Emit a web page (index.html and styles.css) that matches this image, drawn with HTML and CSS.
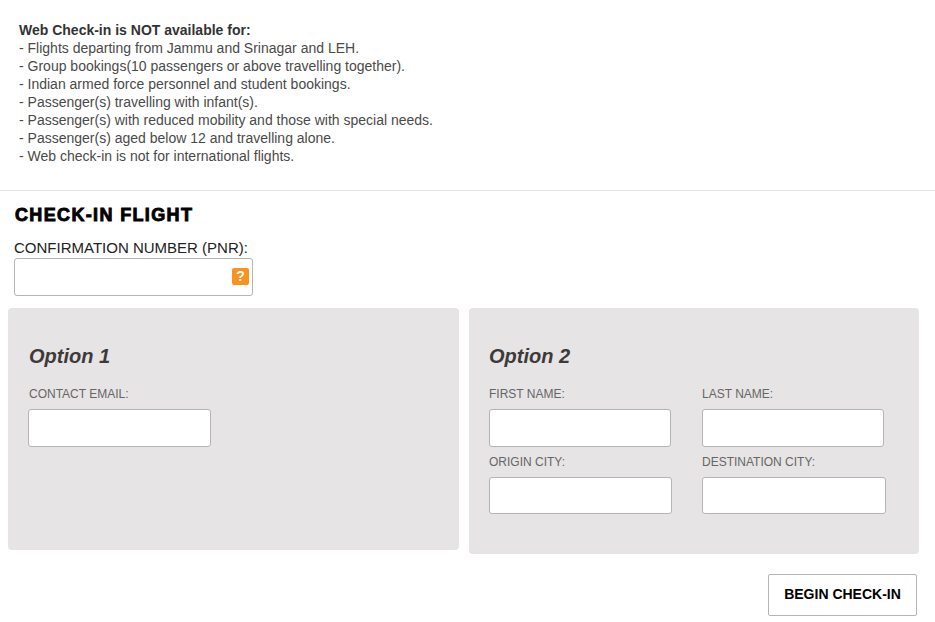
FILE: index.html
```html
<!DOCTYPE html>
<html lang="en">
<head>
  <meta charset="UTF-8">
  <meta name="viewport" content="width=device-width, initial-scale=1.0">
  <title>Web Check-in</title>
  <link rel="stylesheet" href="styles.css">
</head>
<body>
  <!-- Notice -->
  <div class="notice">
    <strong>Web Check-in is NOT available for:</strong><br>
    - Flights departing from Jammu and Srinagar and LEH.<br>
    - Group bookings(10 passengers or above travelling together).<br>
    - Indian armed force personnel and student bookings.<br>
    - Passenger(s) travelling with infant(s).<br>
    - Passenger(s) with reduced mobility and those with special needs.<br>
    - Passenger(s) aged below 12 and travelling alone.<br>
    - Web check-in is not for international flights.
  </div>

  <form class="checkin-form">
    <h1>CHECK-IN FLIGHT</h1>

    <label class="pnr-label" for="pnr">CONFIRMATION NUMBER (PNR):</label>
    <div class="pnr-box">
      <input type="text" id="pnr">
      <span class="help-badge">?</span>
    </div>

    <div class="options">
      <section class="option option-one">
        <h2>Option 1</h2>
        <div class="field">
          <label for="email">CONTACT EMAIL:</label>
          <input type="text" id="email">
        </div>
      </section>

      <section class="option option-two">
        <h2>Option 2</h2>
        <div class="field-grid">
          <div class="field">
            <label for="first-name">FIRST NAME:</label>
            <input type="text" id="first-name">
          </div>
          <div class="field">
            <label for="last-name">LAST NAME:</label>
            <input type="text" id="last-name">
          </div>
          <div class="field field-short">
            <label for="origin">ORIGIN CITY:</label>
            <input type="text" id="origin" class="input-origin">
          </div>
          <div class="field field-short">
            <label for="destination">DESTINATION CITY:</label>
            <input type="text" id="destination" class="input-destination">
          </div>
        </div>
      </section>
    </div>

    <div class="actions">
      <button type="submit">BEGIN CHECK-IN</button>
    </div>
  </form>
</body>
</html>
```

FILE: styles.css
```css
body {
  font-family: 'Liberation Sans', Arial, sans-serif;
  margin: 0;
  background-color: #ffffff;
  color: #333333;
}

input {
  display: block;
  box-sizing: border-box;
  width: 183px;
  height: 38px;
  margin: 0;
  background: #ffffff;
  border: 1px solid #b5b5b5;
  border-radius: 3px;
}

.notice {
  box-sizing: border-box;
  height: 191px;
  padding: 21px 19px 0;
  font-size: 14px;
  line-height: 18px;
  color: #4a4a4a;
  border-bottom: 1px solid #e4e4e4;
}

.notice strong {
  color: #333333;
}

.checkin-form {
  padding: 0 16px 0 8px;
}

h1 {
  margin: 13px 0 0 7px;
  font-size: 18px;
  line-height: 22px;
  font-weight: 700;
  color: #000000;
  letter-spacing: 1.35px;
  -webkit-text-stroke: 0.9px #000000;
}

.pnr-label {
  display: block;
  margin: 13px 0 0 6px;
  font-size: 15px;
  line-height: 18px;
  color: #222222;
}

.pnr-box {
  position: relative;
  width: 239px;
  margin: 1px 0 0 6px;
}

.pnr-box input {
  width: 239px;
}

.help-badge {
  position: absolute;
  top: 10px;
  right: 4px;
  width: 17px;
  height: 17px;
  background: #f7931e;
  border-radius: 2px;
  color: #ffffff;
  font-size: 14px;
  font-weight: 700;
  line-height: 17px;
  text-align: center;
}

.options {
  display: flex;
  align-items: flex-start;
  gap: 10px;
  margin-top: 12px;
}

.option {
  box-sizing: border-box;
  background: #e6e4e5;
  border-radius: 4px;
  padding: 36px 20px 0;
}

.option-one {
  width: 451px;
  height: 242px;
}

.option-two {
  width: 450px;
  height: 246px;
}

h2 {
  margin: 0;
  font-size: 20px;
  line-height: 24px;
  font-style: italic;
  font-weight: 700;
  color: #3d3a3a;
}

.option-one h2 {
  margin-left: 1px;
}

.field label {
  display: block;
  font-size: 12px;
  line-height: 14px;
  color: #666666;
}

.option-one label {
  margin-left: 1px;
}

.option > .field {
  margin-top: 19px;
}

.field input {
  margin-top: 8px;
}

.option-two .field input {
  width: 182px;
}

.field-grid {
  display: grid;
  grid-template-columns: 213px 1fr;
  margin-top: 19px;
}

.field-short {
  margin-top: 8px;
}

.option-two .field .input-origin {
  width: 183px;
  height: 37px;
}

.option-two .field .input-destination {
  width: 184px;
  height: 37px;
}

.actions {
  display: flex;
  justify-content: flex-end;
  margin: 20px 2px 0 0;
}

button {
  width: 149px;
  height: 42px;
  padding: 0 0 2px;
  background: #ffffff;
  border: 1px solid #b5b5b5;
  border-radius: 2px;
  font-family: inherit;
  font-size: 14px;
  font-weight: 700;
  color: #000000;
  cursor: pointer;
}
```
